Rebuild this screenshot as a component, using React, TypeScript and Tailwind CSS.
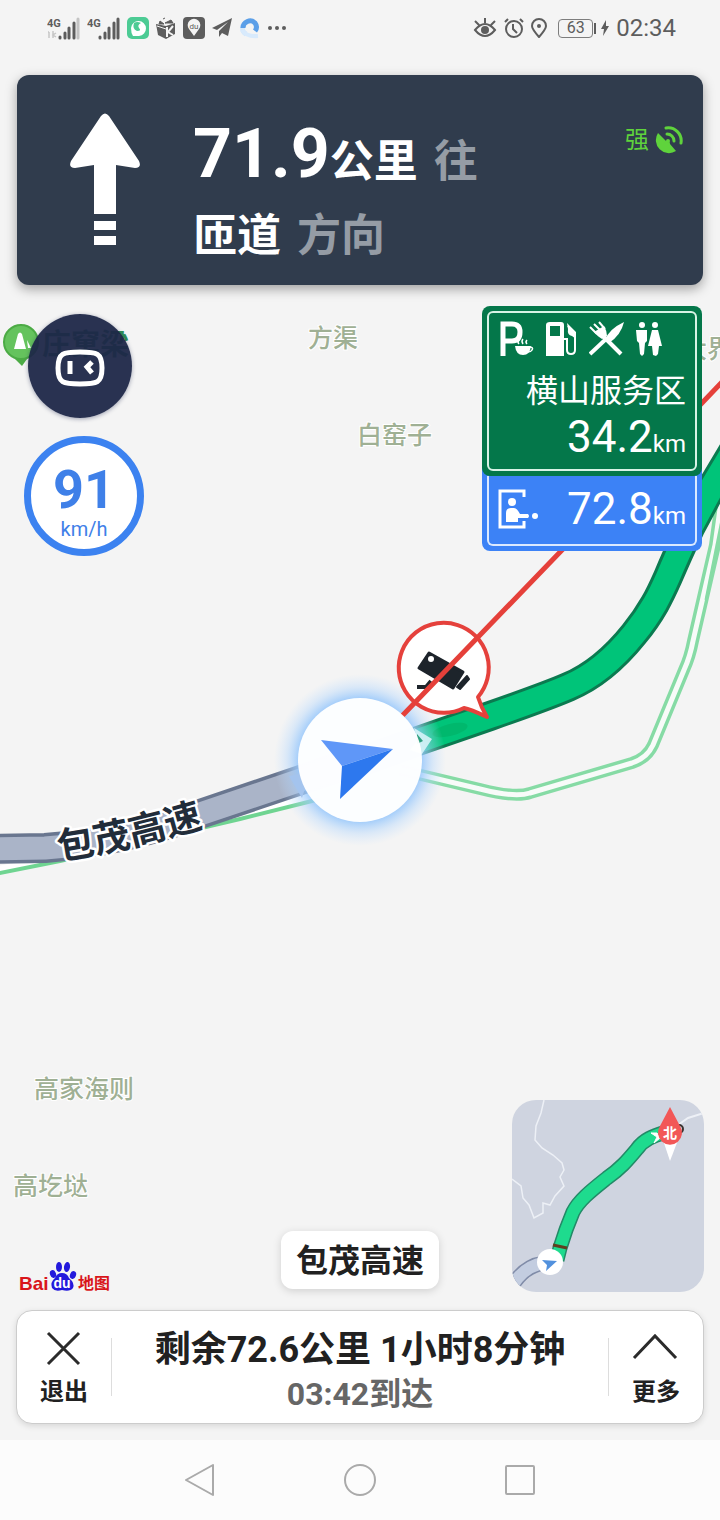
import type { ReactNode } from "react";

type MapLabel = {
  text: string;
  x: number;
  y: number;
};

const mapLabels: MapLabel[] = [
  { text: "方渠", x: 308, y: 347 },
  { text: "白窑子", x: 357, y: 444 },
  { text: "大界", x: 682, y: 358 },
  { text: "高家海则", x: 34, y: 1098 },
  { text: "高圪垯", x: 13, y: 1195 },
];

const routePath =
  "M360 762 L418 741 L490 716 C530 702 552 694 568 687 C592 677 614 659 634 634 C652 612 660 595 668 577 C676 558 682 545 690 528 L712 487 L740 440";
const passedPath = "M-10 849 L45 848 C100 844 150 832 200 814 L360 760";
const sideRoadPath =
  "M400 770 L480 789 Q515 798 530 793 L632 763 Q647 758 653 745 L684 670 Q690 657 693 641 L715 545 L724 480";

function MapCanvas() {
  return (
    <svg
      className="absolute inset-0 h-full w-full"
      viewBox="0 0 720 1440"
      preserveAspectRatio="xMidYMid slice"
      role="img"
      aria-label="导航地图"
    >
      <defs>
        <radialGradient id="glow">
          <stop offset="0.7" stopColor="#93c5fb" stopOpacity="0.9" />
          <stop offset="0.85" stopColor="#b0d5fd" stopOpacity="0.4" />
          <stop offset="1" stopColor="#c5e0ff" stopOpacity="0" />
        </radialGradient>
        <path id="road-name-line" d="M60 860 Q130 850 224 821" />
      </defs>

      {/* side road */}
      <g fill="none" strokeLinejoin="round">
        <path d={sideRoadPath} stroke="#86dba5" strokeWidth="12" />
        <path d={sideRoadPath} stroke="#f8fbf9" strokeWidth="5" />
        <path d="M706 600 L722 520" stroke="#86dba5" strokeWidth="3" />
        <path d="M-5 870 L60 858 L240 814 L320 794" stroke="#ffffff" strokeWidth="7" />
        <path d="M-5 874 L60 861 L240 819 L320 799" stroke="#6fd491" strokeWidth="4" />
      </g>

      {/* driven part and the route ahead */}
      <g fill="none">
        <path d={passedPath} stroke="#69768f" strokeWidth="30" />
        <path d={passedPath} stroke="#aab4c8" strokeWidth="23" />
        <path d={routePath} stroke="#0b7a50" strokeWidth="30" />
        <path d={routePath} stroke="#00c479" strokeWidth="24" />
      </g>
      <ellipse cx="450" cy="730" rx="18" ry="6" fill="#00ac61" opacity="0.5" transform="rotate(-14 450 730)" />

      <g className="font-['Noto_Sans_CJK_SC',sans-serif]">
        {mapLabels.map((label) => (
          <text
            key={label.text}
            x={label.x}
            y={label.y}
            fontSize="25"
            fontWeight="500"
            fill="#9fb094"
            stroke="#ffffff"
            strokeWidth="2"
            paintOrder="stroke"
          >
            {label.text}
          </text>
        ))}
        <text x="42" y="355" fontSize="29" fontWeight="700" fill="#2f8f55">
          庄窠梁
        </text>
        <text
          fontSize="37"
          fontWeight="700"
          fill="#222d3a"
          stroke="#ffffff"
          strokeWidth="5"
          strokeLinejoin="round"
          paintOrder="stroke"
        >
          <textPath href="#road-name-line">包茂高速</textPath>
        </text>
      </g>

      {/* park pin */}
      <path d="M15 359 L22 366 L27 359 Z" fill="#4cab45" />
      <circle cx="21" cy="342" r="17" fill="#65c35d" stroke="#4cab45" strokeWidth="2" />
      <path d="M14 349 L18 334 Q20 331 22 334 L26 349 Z M27 340 L31 348 L28 348 Z" fill="#ffffff" />

      {/* own position */}
      <circle cx="360" cy="760" r="86" fill="url(#glow)" />
      <path d="M414 728 L432 739 L422 754 L410 750 L418 740 Z" fill="#d6f3f7" opacity="0.9" />
      <path d="M417 734 L423 741 L417 744 Z" fill="#2fa080" />
      <path d="M289 776 L310 772 L302 798 Z" fill="#a4c4ee" />

      {/* camera warning */}
      <path
        d="M478 697 A45 45 0 1 0 464 708 Q470 709 487 717 Q481 707 478 697 Z"
        fill="#ffffff"
        stroke="#e5413c"
        strokeWidth="4"
        strokeLinejoin="round"
      />
      <g fill="#1d242b" stroke="#1d242b" strokeLinejoin="round">
        <path d="M429 653 L463 672 L453 688 L419 668 Z" strokeWidth="3" />
        <path d="M467 676 L469 679 L460 689 L457 687 Z" strokeWidth="2" />
        <path d="M417 687 H426 L431 681" fill="none" strokeWidth="4" />
      </g>
      <circle cx="431" cy="659" r="3" fill="#ffffff" />
      <path d="M402 716 L563 549 L702 403 L724 380" fill="none" stroke="#e5403a" strokeWidth="5" />

      <circle cx="360" cy="760" r="62" fill="#ffffff" fillOpacity="0.97" />
      <path d="M321 740 L393 749 L342 766 Z" fill="#5f97f8" />
      <path d="M393 749 L340 799 L342 766 Z" fill="#2d78ee" />
    </svg>
  );
}

function SignalBars({ weak }: { weak?: boolean }) {
  return (
    <svg className="h-6 w-[33px]" viewBox="0 0 33 24" aria-hidden="true">
      <text x="0" y="11" fontSize="11" fontWeight="700" fill="#5d5d5d" className="font-[Roboto,sans-serif]">
        4G
      </text>
      {weak ? (
        <path d="M2 16 V22 M1 16 H2 M6 15 V22 M9 17 L6 19 L9 21" stroke="#c6c6c6" strokeWidth="1.5" fill="none" />
      ) : null}
      <path d="M13 21 V22 M18 17 V22 M22 12 V22 M27 7 V22" stroke="#5d5d5d" strokeWidth="3" strokeLinecap="round" />
      <path d="M31 3 V22" stroke={weak ? "#c4c4c4" : "#5d5d5d"} strokeWidth="3" strokeLinecap="round" />
    </svg>
  );
}

function StatusBar() {
  return (
    <header className="flex h-14 items-center justify-between pr-11 pl-[47px] text-[#5d5d5d]">
      <div className="flex items-center gap-[7px]">
        <SignalBars weak />
        <SignalBars />
        <svg className="size-[22px]" viewBox="0 0 22 22" aria-hidden="true">
          <rect width="22" height="22" rx="5" fill="#4ccb94" />
          <path d="M4 11 A7.5 7.5 0 1 1 12 19 L6 19 Q4 16 4 11 Z" fill="#ffffff" />
          <path d="M7 6 Q10 4 14 6 Q10 8 12 11 Q15 14 10 14 Q5 12 7 6 Z" fill="#4ccb94" />
        </svg>
        <svg className="h-[22px] w-5" viewBox="0 0 20 22" fill="#5d5d5d" aria-hidden="true">
          <path d="M0 7 L10 9 L19 6 V17 L10 22 L2 18 Z" />
          <path d="M4 4 L8 7 L3 7 Z M7 2 L9 1 M9 6 L15 3 L17 6 Z" stroke="#5d5d5d" />
          <path d="M11 10 V20 M17 9 L12 15 L17 18" stroke="#f4f4f4" strokeWidth="2" fill="none" />
          <path d="M1 9 L10 12" stroke="#f4f4f4" strokeWidth="1" />
        </svg>
        <svg className="size-[22px]" viewBox="0 0 22 22" aria-hidden="true">
          <rect width="22" height="22" rx="4" fill="#5d5d5d" />
          <path d="M11 19 L6 12 A6.3 6.3 0 1 1 16 12 Z" fill="#f4f4f4" />
          <text x="11" y="12" fontSize="8" textAnchor="middle" fill="#5d5d5d" className="font-[Roboto,sans-serif]">
            du
          </text>
        </svg>
        <svg className="size-5" viewBox="0 0 20 20" fill="#5d5d5d" aria-hidden="true">
          <path d="M20 0 L0 10 L5 12 L16 4 L7 13 V19 L10 15 L16 18 Z" />
        </svg>
        <svg className="size-[22px]" viewBox="0 0 22 22" fill="none" aria-hidden="true">
          <path d="M7 17 A7 7 0 0 1 4 8" stroke="#d3e7fb" strokeWidth="5" />
          <path d="M3 13 Q7 20 19 19" stroke="#d8eafc" strokeWidth="4" />
          <path d="M4 11 A7 7 0 0 1 16 6 Q19 10 16 14" stroke="#5b9fe8" strokeWidth="5" />
        </svg>
        <svg className="h-1 w-[18px]" viewBox="0 0 18 4" fill="#5d5d5d" aria-hidden="true">
          <circle cx="2" cy="2" r="2" />
          <circle cx="9" cy="2" r="2" />
          <circle cx="16" cy="2" r="2" />
        </svg>
      </div>
      <div className="flex items-center gap-[7px]">
        <svg className="h-5 w-6" viewBox="0 0 24 20" fill="none" stroke="#5d5d5d" strokeWidth="2" aria-hidden="true">
          <path d="M2 12 Q12 0 22 12 Q12 24 2 12 Z M12 5 V0 M6 7 L2 3 M18 7 L22 3" />
          <circle cx="12" cy="12" r="4" fill="#5d5d5d" stroke="none" />
        </svg>
        <svg className="size-5" viewBox="0 0 20 20" fill="none" stroke="#5d5d5d" strokeWidth="2" aria-hidden="true">
          <circle cx="10" cy="11" r="8" />
          <path d="M9 6 V11 L13 15 M1 4 L4 1 M16 1 L19 4" />
        </svg>
        <svg className="h-5 w-4" viewBox="0 0 16 20" fill="none" stroke="#5d5d5d" strokeWidth="2" aria-hidden="true">
          <path d="M8 19 Q1 11 1 8 A7 7 0 0 1 15 8 Q15 11 8 19 Z" />
          <circle cx="8" cy="8" r="2" fill="#5d5d5d" stroke="none" />
        </svg>
        <div className="ml-1 flex items-center gap-px">
          <span className="flex h-[19px] w-[35px] items-center justify-center rounded-sm border border-[#7d7d7d] text-base leading-none">
            63
          </span>
          <span className="h-[11px] w-0.5 bg-[#5d5d5d]" />
          <svg className="ml-1 h-4 w-2" viewBox="0 0 8 16" fill="#5d5d5d" aria-hidden="true">
            <path d="M5 0 L0 9 H3 L2 16 L8 6 H5 Z" />
          </svg>
        </div>
        <time className="text-2xl leading-none">02:34</time>
      </div>
    </header>
  );
}

function TurnBanner() {
  return (
    <section className="mx-[17px] mt-[19px] flex h-[210px] rounded-xl bg-[#303c4d] pr-5 pl-[53px] font-bold text-white shadow-[0_4px_12px_rgba(0,0,0,0.35)]">
      <svg className="mt-[38px] h-[136px] w-[70px] shrink-0" viewBox="0 0 70 136" fill="#ffffff" aria-label="直行">
        <path d="M31 3 Q35 -2 39 3 L69 48 Q72 55 65 55 L46 52 V101 H24 V52 L5 55 Q-2 55 1 48 Z" />
        <rect x="24" y="108" width="22" height="9" />
        <rect x="24" y="123" width="22" height="9" />
      </svg>
      <div className="ml-[53px] flex-1 pt-[39px]">
        <p className="flex items-baseline text-[44px] leading-[80px] whitespace-nowrap">
          <span className="text-[68px]">71.9</span>
          <span>公里</span>
          <span className="ml-4 text-[#959ca5]">往</span>
        </p>
        <p className="flex gap-4 text-[44px] leading-[68px] whitespace-nowrap">
          <span>匝道</span>
          <span className="text-[#959ca5]">方向</span>
        </p>
      </div>
      <div className="mt-[51px] flex h-7 items-center gap-1.5 text-2xl font-normal text-[#5fd33c]">
        <span>强</span>
        <svg className="size-7" viewBox="0 0 28 28" fill="none" stroke="#5fd33c" strokeWidth="3" aria-hidden="true">
          <path d="M3 7 L11 15 A3 3 0 0 1 15 18 L21 25 A13 13 0 0 1 3 7 Z" fill="#5fd33c" stroke="none" />
          <circle cx="13" cy="15" r="2" fill="#5fd33c" stroke="none" />
          <path d="M12 8 A7 7 0 0 1 19 15" strokeLinecap="round" />
          <path d="M11 2 A13 13 0 0 1 26 17" strokeLinecap="round" />
        </svg>
      </div>
    </section>
  );
}

function ServiceIcons() {
  return (
    <div className="flex h-9 items-center gap-3 text-white">
      <svg className="h-9 w-[34px]" viewBox="0 0 34 36" fill="none" stroke="#ffffff" aria-label="停车">
        <path d="M3 35 V3 H12 Q20 3 20 11 Q20 20 12 20 H3" strokeWidth="5" />
        <path d="M15 25 H31 Q30 34 23 34 Q16 34 15 25 Z" fill="#ffffff" stroke="none" />
        <path d="M29 26 Q34 26 32 29 Q31 31 28 31" strokeWidth="1.5" />
        <path d="M19 23 Q17 21 19 19 M23 23 Q21 20 23 18 M27 23 Q25 21 27 19" strokeWidth="1.5" />
      </svg>
      <svg className="h-9 w-[31px]" viewBox="0 0 31 36" aria-label="加油">
        <path
          d="M4 1 H15 Q18 1 18 4 V35 H0 V4 Q0 1 4 1 Z M4 5 V15 H14 V5 Z"
          fill="#ffffff"
          fillRule="evenodd"
        />
        <path d="M18 18 H21 V29 Q21 33 25 33 Q29 33 29 29 V14 L22 5" fill="none" stroke="#ffffff" strokeWidth="2" />
        <path d="M21 2 L30 11 V18 L26 15 Q21 14 22 8 Z" fill="#ffffff" />
      </svg>
      <svg className="h-9 w-[35px]" viewBox="0 0 35 36" fill="none" stroke="#ffffff" aria-label="餐饮">
        <path d="M1 33 L17 18" strokeWidth="4" />
        <path d="M16 19 Q20 8 35 1 Q32 14 20 22 Z" fill="#ffffff" stroke="none" />
        <path d="M14 15 L32 33" strokeWidth="4" />
        <path d="M1 6 L8 13 M5 3 L12 10 M10 1 L16 8" strokeWidth="2" />
        <path d="M5 11 L15 5 Q18 10 18 15 L13 18 Q8 15 5 11 Z" fill="#ffffff" stroke="none" />
      </svg>
      <svg className="h-9 w-[26px]" viewBox="0 0 26 36" fill="#ffffff" aria-label="卫生间">
        <circle cx="6" cy="4" r="3" />
        <path d="M0 9 H11 V20 L9 22 L8 33 L6 35 L4 33 L3 22 L1 20 Z" />
        <circle cx="19" cy="4" r="3" />
        <path d="M16 9 H22 L26 25 H23 L22 33 L20 35 L17 34 L16 25 H12 Z" />
      </svg>
    </div>
  );
}

function Distance({ value }: { value: string }) {
  return (
    <p className="flex items-baseline justify-end text-[44px] leading-[52px]">
      {value}
      <span className="text-2xl leading-none">km</span>
    </p>
  );
}

function RoadSigns() {
  return (
    <aside className="w-[220px] text-white">
      <div className="relative rounded-lg bg-[#04774a] p-[5px]">
        <div className="rounded-md border-2 border-[#d8f3e6] pt-2 pr-[9px] pb-1.5 pl-[11px]">
          <ServiceIcons />
          <p className="mt-3.5 text-right text-[32px] leading-10 font-normal whitespace-nowrap">横山服务区</p>
          <Distance value="34.2" />
        </div>
      </div>
      <div className="-mt-2 rounded-b-lg bg-[#3c82f6] px-[5px] pt-2 pb-[5px]">
        <div className="flex items-center justify-between rounded-b-md border-2 border-t-0 border-[#dbe9ff] pt-[7px] pr-[9px] pb-[9px] pl-[9px]">
          <svg className="h-10 w-10" viewBox="0 0 40 40" fill="none" stroke="#ffffff" strokeWidth="3" aria-label="收费站">
            <path d="M26 8 V2 H2 V38 H26 V32" />
            <circle cx="14" cy="13" r="4" fill="#ffffff" stroke="none" />
            <path d="M8 33 V24 Q8 19 13 19 H16 Q19 19 22 25 H30 V29 H20 V33 Z" fill="#ffffff" stroke="none" />
            <circle cx="29" cy="27" r="2" fill="#ffffff" stroke="none" />
            <circle cx="37" cy="27" r="3" fill="#ffffff" stroke="none" />
          </svg>
          <Distance value="72.8" />
        </div>
      </div>
    </aside>
  );
}

function SpeedMeter() {
  return (
    <div className="flex size-[120px] flex-col items-center rounded-full border-[7px] border-[#3c82f0] bg-white pt-5 text-[#3f80e8]">
      <strong className="text-[54px] leading-[54px] font-bold">91</strong>
      <span className="text-xl leading-6">km/h</span>
    </div>
  );
}

function BaiduLogo() {
  return (
    <svg className="ml-0.5 h-8 w-[92px]" viewBox="0 0 92 32" aria-label="百度地图">
      <g fill="#2319dc">
        <ellipse cx="35" cy="14" rx="3" ry="4" transform="rotate(-20 35 14)" />
        <ellipse cx="41" cy="7" rx="3" ry="5" />
        <ellipse cx="49" cy="7" rx="3" ry="5" transform="rotate(8 49 7)" />
        <ellipse cx="55" cy="15" rx="3" ry="4" transform="rotate(20 55 15)" />
        <path d="M44 13 Q49 13 51 18 Q57 23 55 28 Q52 32 44 30 Q37 32 34 28 Q32 22 37 18 Q39 13 44 13 Z" />
      </g>
      <text x="44" y="28" fontSize="14" fontWeight="700" textAnchor="middle" fill="#ffffff" className="font-['Liberation_Sans',sans-serif]">
        du
      </text>
      <text x="1" y="30" fontSize="19" fontWeight="700" fill="#d9161b" className="font-['Liberation_Sans',sans-serif]">
        Bai
      </text>
      <text x="60" y="29" fontSize="16" fontWeight="700" fill="#d9161b" className="font-['Noto_Sans_CJK_SC',sans-serif]">
        地图
      </text>
    </svg>
  );
}

const overviewRoute =
  "M45 160 L48 148 C51 138 55 126 61 112 C67 100 80 90 95 78 C108 69 115 61 125 49 C133 38 142 36 160 30";

function OverviewMap() {
  return (
    <svg className="size-48 justify-self-end rounded-3xl bg-[#cfd4e0]" viewBox="0 0 192 192" aria-label="路线全览">
      <g fill="none" stroke="#edf0f6" strokeWidth="1.5">
        <path d="M32 0 L29 13 L24 26 L23 40 L30 48 L41 55 L50 63 L52 70 L48 77 L52 86 L43 96 L38 105 L31 103 L31 113 L22 118 L17 105 L11 98 L9 86 L0 79" />
        <path d="M166 25 L176 18 L192 13" strokeWidth="2" />
      </g>
      <path d="M0 186 Q12 166 32 163" fill="none" stroke="#808ca8" strokeWidth="15" />
      <path d="M0 186 Q12 166 32 163" fill="none" stroke="#c3cde0" strokeWidth="12" />
      <circle cx="167" cy="29" r="4" fill="#cfd4e0" stroke="#3a3330" strokeWidth="2" />
      <path d={overviewRoute} fill="none" stroke="#238a67" strokeWidth="15" />
      <path d={overviewRoute} fill="none" stroke="#1edb8e" strokeWidth="12" />
      <path d="M139 33 L145 37 L142 43 L148 38 L145 33 Z" fill="#ffffff" stroke="#ffffff" />
      <path d="M41 145 L55 148" stroke="#5f4020" strokeWidth="3" />
      <circle cx="38" cy="162" r="13" fill="#ffffff" />
      <path d="M30 160 L45 161 L34 171 L35 165 Z" fill="#5291dd" />
      <path d="M151 40 L158 61 L166 40 Z" fill="#ffffff" />
      <path d="M158 7 L168 26 A12 12 0 1 1 148 26 Z" fill="#f25757" />
      <text x="158" y="38" fontSize="14" fontWeight="700" textAnchor="middle" fill="#ffffff">
        北
      </text>
    </svg>
  );
}

function TripButton({ label, children }: { label: string; children: ReactNode }) {
  return (
    <button className="flex w-[94px] flex-col items-center gap-1.5 pt-1" type="button">
      <svg className="h-10 w-12" viewBox="0 0 48 40" fill="none" stroke="#2b2b2b" strokeWidth="3" aria-hidden="true">
        {children}
      </svg>
      <span className="text-2xl leading-8 font-bold">{label}</span>
    </button>
  );
}

function TripBar() {
  return (
    <section className="mx-4 mt-[18px] mb-4 flex h-[114px] items-center rounded-2xl border border-[#cccccc] bg-white text-[#212121] shadow-[0_2px_6px_rgba(0,0,0,0.12)]">
      <TripButton label="退出">
        <path d="M8 3 L39 34 M39 3 L8 34" />
      </TripButton>
      <div className="flex h-[58px] flex-1 flex-col items-center justify-center border-x border-[#dddddd] pt-2 font-bold whitespace-nowrap">
        <p className="text-4xl leading-[46px]">剩余72.6公里 1小时8分钟</p>
        <p className="text-[32px] leading-[42px] text-[#666666]">03:42到达</p>
      </div>
      <TripButton label="更多">
        <path d="M2 28 L23 6 L44 28" />
      </TripButton>
    </section>
  );
}

function SystemNav() {
  return (
    <nav className="flex h-20 items-center justify-center gap-32 bg-[#fcfcfc]">
      <button className="size-8" type="button" aria-label="返回">
        <svg viewBox="0 0 32 32" fill="none" stroke="#aaaaaa" strokeWidth="2" strokeLinejoin="round">
          <path d="M2 16 L29 1 V31 Z" />
        </svg>
      </button>
      <button className="size-8" type="button" aria-label="主页">
        <svg viewBox="0 0 32 32" fill="none" stroke="#aaaaaa" strokeWidth="2">
          <circle cx="16" cy="16" r="15" />
        </svg>
      </button>
      <button className="size-8" type="button" aria-label="最近任务">
        <svg viewBox="0 0 32 32" fill="none" stroke="#aaaaaa" strokeWidth="2">
          <rect x="2" y="2" width="28" height="28" rx="1" />
        </svg>
      </button>
    </nav>
  );
}

export default function App() {
  return (
    <div className="flex min-h-screen flex-col bg-[#f4f4f4] font-[Roboto,'Noto_Sans_CJK_SC',sans-serif]">
      <main className="relative flex flex-1 flex-col">
        <MapCanvas />
        <div className="relative flex flex-1 flex-col">
          <StatusBar />
          <TurnBanner />
          <div className="mt-[21px] flex items-start justify-between pr-[18px] pl-6">
            <div className="flex flex-col gap-[18px] pt-2">
              <button
                className="ml-1 flex size-[104px] items-center justify-center rounded-full bg-[#1e2748]/95 pt-1 shadow-[0_1px_4px_rgba(30,40,80,0.4)]"
                type="button"
                aria-label="语音助手"
              >
                <svg className="h-[38px] w-[50px]" viewBox="0 0 50 38" fill="none" stroke="#ffffff" aria-hidden="true">
                  <path
                    d="M25 3 C42 3 47 4 47 19 C47 34 42 35 25 35 C8 35 3 34 3 19 C3 4 8 3 25 3 Z"
                    strokeWidth="5"
                  />
                  <path d="M15 12 V25" strokeWidth="5" />
                  <path d="M37 13 L32 18 L37 24" strokeWidth="5" />
                </svg>
              </button>
              <SpeedMeter />
            </div>
            <RoadSigns />
          </div>
          <div className="mt-auto grid grid-cols-[1fr_auto_1fr] items-end px-4">
            <BaiduLogo />
            <p className="mb-[3px] rounded-xl bg-white px-[15px] pt-[9px] pb-[7px] text-[32px] leading-[42px] font-bold text-[#212121] shadow-[0_2px_8px_rgba(0,0,0,0.15)]">
              包茂高速
            </p>
            <OverviewMap />
          </div>
          <TripBar />
        </div>
      </main>
      <SystemNav />
    </div>
  );
}
